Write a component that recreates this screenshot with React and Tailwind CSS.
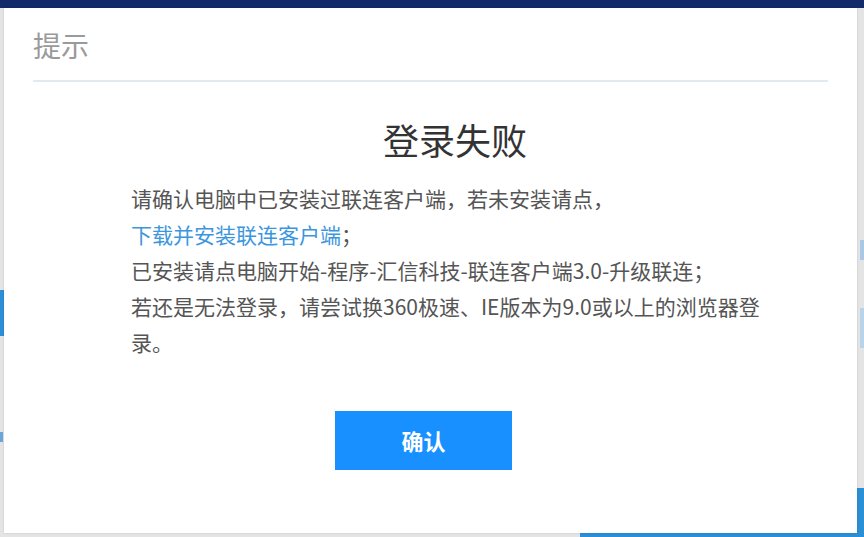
import React from "react";

const CJK = { fontFamily: '"Noto Sans CJK SC", "Noto Sans", sans-serif' };

// the page under the dialog: only its edges show around the overlay
function Background() {
  return (
    <div className="flex h-full w-full flex-col bg-[#e4e4e4]">
      <div className="h-[8px] w-full shrink-0 bg-[#12296a]" />
      <div className="flex flex-1">
        <div className="flex w-[4px] flex-col">
          <div className="mt-[282px] h-[46px] bg-[#2d8fd8]" />
          <div className="mt-[96px] h-[10px] w-[3px] bg-[#6aa7d8]" />
        </div>
        <div className="flex flex-1 flex-col justify-end">
          <div className="ml-[576px] h-[4px] bg-[#2b8fd6]" />
        </div>
        <div className="flex w-[7px] flex-col items-end">
          <div className="mt-[232px] h-[20px] w-[4px] bg-[#a9c8e6]" />
          <div className="mt-[48px] h-[40px] w-[4px] bg-[#b9d3ea]" />
          <div className="mt-[140px] w-full flex-1 bg-[#2b8fd6]" />
        </div>
      </div>
    </div>
  );
}

export default function App() {
  return (
    <div className="relative h-[537px] w-[864px] overflow-hidden" style={CJK}>
      <Background />

      {/* dialog overlay */}
      <div className="absolute left-[4px] top-[8px] flex h-[525px] w-[853px] flex-col bg-white shadow-[0_0_2px_rgba(0,0,0,0.15)]">
        <div className="px-[29px] pt-[23px]">
          <div className="text-[28px] leading-none text-[#9a9a9a]">提示</div>
          <div className="mt-[21px] h-[2px] w-full bg-[#e2e9f1]" />
        </div>

        <div className="ml-[127px] mt-[39px] w-[648px]">
          <h1 className="text-center text-[36px] font-normal leading-none text-[#333333]">
            登录失败
          </h1>
          <div className="mt-[23px] text-[21px] leading-[36px] text-[#555555]">
            <p>请确认电脑中已安装过联连客户端，若未安装请点，</p>
            <p>
              <a className="text-[#3c96de]">下载并安装联连客户端</a>；
            </p>
            <p>已安装请点电脑开始-程序-汇信科技-联连客户端3.0-升级联连；</p>
            <p>若还是无法登录，请尝试换360极速、IE版本为9.0或以上的浏览器登</p>
            <p>录。</p>
          </div>
        </div>

        <div className="ml-[331px] mt-[51px]">
          <button className="flex h-[59px] w-[177px] items-center justify-center bg-[#1890ff] text-[22px] font-bold text-white">
            确认
          </button>
        </div>
      </div>
    </div>
  );
}
